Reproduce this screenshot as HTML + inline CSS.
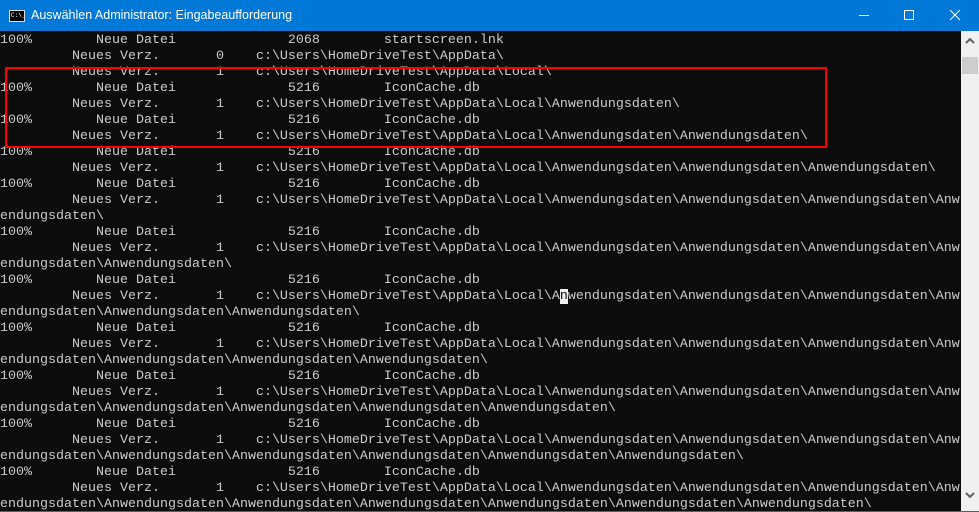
<!DOCTYPE html>
<html><head><meta charset="utf-8"><style>
body{margin:0;width:979px;height:512px;overflow:hidden;background:#0078d7;position:relative;font-family:"Liberation Sans",sans-serif}
#title{position:absolute;left:0;top:0;width:979px;height:31px;background:#0078d7;color:#fff;font-size:12.5px}
#title .t{position:absolute;left:31px;top:8px}
#icon{position:absolute;left:9px;top:10px;width:14px;height:10px;background:#000;border:1px solid #ddd;color:#fff;font:6px "Liberation Mono",monospace;line-height:10px;text-indent:1px;overflow:hidden}
#con{position:absolute;left:0;top:31px;width:961px;height:480px;background:#0c0c0c;overflow:hidden}
pre{margin:0;padding-top:2px;width:960px;font:13.333px/16px "Liberation Mono",monospace;color:#cccccc;white-space:pre-wrap;word-break:break-all}
.cur{background:#f2f2f2;color:#0c0c0c}
#red{position:absolute;left:5px;top:67px;width:818px;height:77px;border:2px solid #f00}
#sb{position:absolute;left:961px;top:31px;width:18px;height:480px;background:#f0f0f0}
#thumb{position:absolute;left:1px;top:26px;width:16px;height:17px;background:#cdcdcd}
</style></head><body>
<div id="title"><div id="icon">C:\_</div><span class="t">Auswählen Administrator: Eingabeaufforderung</span>
<svg style="position:absolute;left:858px;top:10px" width="12" height="12"><line x1="1" y1="5.5" x2="11" y2="5.5" stroke="#fff"/></svg>
<svg style="position:absolute;left:903px;top:10px" width="12" height="12"><rect x="1.5" y="0.5" width="9" height="9" fill="none" stroke="#fff"/></svg>
<svg style="position:absolute;left:949px;top:9px" width="12" height="12"><path d="M1 1L11 11M11 1L1 11" stroke="#fff"/></svg>
</div>
<div id="con"><pre>100%        Neue Datei              2068        startscreen.lnk
         Neues Verz.       0    c:\Users\HomeDriveTest\AppData\
         Neues Verz.       1    c:\Users\HomeDriveTest\AppData\Local\
100%        Neue Datei              5216        IconCache.db
         Neues Verz.       1    c:\Users\HomeDriveTest\AppData\Local\Anwendungsdaten\
100%        Neue Datei              5216        IconCache.db
         Neues Verz.       1    c:\Users\HomeDriveTest\AppData\Local\Anwendungsdaten\Anwendungsdaten\
100%        Neue Datei              5216        IconCache.db
         Neues Verz.       1    c:\Users\HomeDriveTest\AppData\Local\Anwendungsdaten\Anwendungsdaten\Anwendungsdaten\
100%        Neue Datei              5216        IconCache.db
         Neues Verz.       1    c:\Users\HomeDriveTest\AppData\Local\Anwendungsdaten\Anwendungsdaten\Anwendungsdaten\Anw
endungsdaten\
100%        Neue Datei              5216        IconCache.db
         Neues Verz.       1    c:\Users\HomeDriveTest\AppData\Local\Anwendungsdaten\Anwendungsdaten\Anwendungsdaten\Anw
endungsdaten\Anwendungsdaten\
100%        Neue Datei              5216        IconCache.db
         Neues Verz.       1    c:\Users\HomeDriveTest\AppData\Local\A<span class="cur">n</span>wendungsdaten\Anwendungsdaten\Anwendungsdaten\Anw
endungsdaten\Anwendungsdaten\Anwendungsdaten\
100%        Neue Datei              5216        IconCache.db
         Neues Verz.       1    c:\Users\HomeDriveTest\AppData\Local\Anwendungsdaten\Anwendungsdaten\Anwendungsdaten\Anw
endungsdaten\Anwendungsdaten\Anwendungsdaten\Anwendungsdaten\
100%        Neue Datei              5216        IconCache.db
         Neues Verz.       1    c:\Users\HomeDriveTest\AppData\Local\Anwendungsdaten\Anwendungsdaten\Anwendungsdaten\Anw
endungsdaten\Anwendungsdaten\Anwendungsdaten\Anwendungsdaten\Anwendungsdaten\
100%        Neue Datei              5216        IconCache.db
         Neues Verz.       1    c:\Users\HomeDriveTest\AppData\Local\Anwendungsdaten\Anwendungsdaten\Anwendungsdaten\Anw
endungsdaten\Anwendungsdaten\Anwendungsdaten\Anwendungsdaten\Anwendungsdaten\Anwendungsdaten\
100%        Neue Datei              5216        IconCache.db
         Neues Verz.       1    c:\Users\HomeDriveTest\AppData\Local\Anwendungsdaten\Anwendungsdaten\Anwendungsdaten\Anw
endungsdaten\Anwendungsdaten\Anwendungsdaten\Anwendungsdaten\Anwendungsdaten\Anwendungsdaten\Anwendungsdaten\</pre></div>
<div id="red"></div>
<div id="sb"><svg style="position:absolute;left:4px;top:6px" width="10" height="8"><path d="M1 6L5 2L9 6" stroke="#606060" stroke-width="2" fill="none"/></svg><div id="thumb"></div>
<svg style="position:absolute;left:4px;top:460px" width="10" height="8"><path d="M1 2L5 6L9 2" stroke="#606060" stroke-width="2" fill="none"/></svg></div>
</body></html>
